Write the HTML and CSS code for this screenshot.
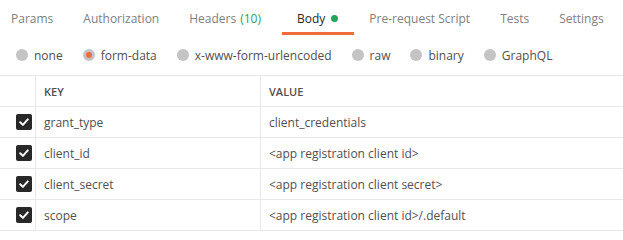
FILE: index.html
```html
<!DOCTYPE html>
<html>
<head>
<meta charset="utf-8">
<link rel="stylesheet" href="styles.css">
</head>
<body>
<div class="page">
  <nav class="tabs">
    <span class="tab">Params</span>
    <span class="tab">Authorization</span>
    <span class="tab headers">Headers <span class="count">(10)</span></span>
    <span class="tab active">Body <span class="dot"></span></span>
    <span class="tab">Pre-request Script</span>
    <span class="tab">Tests</span>
    <span class="tab">Settings</span>
  </nav>
  <div class="radios">
    <label class="radio"><span class="circle"></span>none</label>
    <label class="radio"><span class="circle on"></span>form-data</label>
    <label class="radio"><span class="circle"></span>x-www-form-urlencoded</label>
    <label class="radio"><span class="circle"></span>raw</label>
    <label class="radio"><span class="circle"></span>binary</label>
    <label class="radio"><span class="circle"></span>GraphQL</label>
  </div>
  <div class="table">
    <div class="row head">
      <div class="cell check"></div>
      <div class="cell key">KEY</div>
      <div class="cell value">VALUE</div>
    </div>
    <div class="row">
      <div class="cell check"><span class="box"><svg viewBox="0 0 16 16" width="16" height="16"><path d="M4.2 8.3 L6.9 10.9 L11.8 5.4" fill="none" stroke="#fff" stroke-width="2" stroke-linecap="round" stroke-linejoin="round"/></svg></span></div>
      <div class="cell key">grant_type</div>
      <div class="cell value">client_credentials</div>
    </div>
    <div class="row">
      <div class="cell check"><span class="box"><svg viewBox="0 0 16 16" width="16" height="16"><path d="M4.2 8.3 L6.9 10.9 L11.8 5.4" fill="none" stroke="#fff" stroke-width="2" stroke-linecap="round" stroke-linejoin="round"/></svg></span></div>
      <div class="cell key">client_id</div>
      <div class="cell value">&lt;app registration client id&gt;</div>
    </div>
    <div class="row">
      <div class="cell check"><span class="box"><svg viewBox="0 0 16 16" width="16" height="16"><path d="M4.2 8.3 L6.9 10.9 L11.8 5.4" fill="none" stroke="#fff" stroke-width="2" stroke-linecap="round" stroke-linejoin="round"/></svg></span></div>
      <div class="cell key">client_secret</div>
      <div class="cell value">&lt;app registration client secret&gt;</div>
    </div>
    <div class="row">
      <div class="cell check"><span class="box"><svg viewBox="0 0 16 16" width="16" height="16"><path d="M4.2 8.3 L6.9 10.9 L11.8 5.4" fill="none" stroke="#fff" stroke-width="2" stroke-linecap="round" stroke-linejoin="round"/></svg></span></div>
      <div class="cell key">scope</div>
      <div class="cell value">&lt;app registration client id&gt;/.default</div>
    </div>
  </div>
</div>
</body>
</html>
```
FILE: styles.css
```css
* { box-sizing: border-box; }
html, body { margin: 0; padding: 0; background: #fff; }
body {
  font-family: "Open Sans", "Liberation Sans", sans-serif;
  font-size: 12px;
  color: #505050;
  width: 623px;
  height: 232px;
  overflow: hidden;
}
.tabs {
  display: flex;
  height: 35px;
  margin-left: -4px;
  padding-top: 1px;
}
.tab {
  position: relative;
  display: flex;
  align-items: center;
  padding: 0 15px;
  height: 34px;
  color: #808080;
  font-size: 12px;
  white-space: nowrap;
}
.tab.headers { padding-right: 21px; }
.tab .count { color: #26a35a; margin-left: 4px; }
.tab.active { color: #282828; padding-right: 16px; }
.tab.active::after {
  content: "";
  position: absolute;
  left: 0;
  right: 0;
  bottom: 0;
  height: 3px;
  background: #f26b3a;
}
.tab .dot {
  display: inline-block;
  width: 7px;
  height: 7px;
  border-radius: 50%;
  background: #26a35a;
  margin-left: 6px;
}
.radios {
  display: flex;
  align-items: center;
  gap: 20px;
  height: 40px;
  padding-left: 16px;
}
.radio {
  display: flex;
  align-items: center;
  gap: 6px;
  color: #505050;
  font-size: 12px;
}
.circle {
  width: 12px;
  height: 12px;
  border-radius: 50%;
  background: #c4c4c4;
  display: flex;
  align-items: center;
  justify-content: center;
}
.circle.on::after {
  content: "";
  width: 6px;
  height: 6px;
  border-radius: 50%;
  background: #f26b3a;
}
.table {
  border-top: 1px solid #e8e8e8;
}
.row {
  display: flex;
  height: 31px;
  border-bottom: 1px solid #e8e8e8;
}
.cell {
  display: flex;
  align-items: center;
  padding-left: 8px;
}
.check {
  width: 36px;
  padding-left: 16px;
  border-right: 1px solid #e8e8e8;
}
.key {
  width: 225px;
  border-right: 1px solid #e8e8e8;
}
.value { flex: 1; }
.head .cell {
  font-size: 11px;
  font-weight: 600;
  color: #505050;
}
.box {
  width: 16px;
  height: 16px;
  border-radius: 2px;
  background: #282828;
  display: block;
}
.box svg { display: block; }
```
